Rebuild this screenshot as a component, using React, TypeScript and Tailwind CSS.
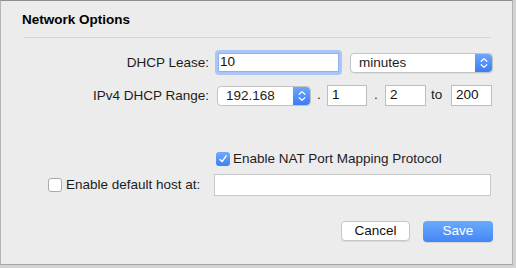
import React from "react";

function Stepper() {
  return (
    <div className="flex h-full w-[17px] items-center justify-center rounded-r-[4px] bg-gradient-to-b from-[#6ea6fb] to-[#3b7cf4]">
      <svg width="8" height="12" viewBox="0 0 8 12" fill="none">
        <path d="M1.2 4.3 L4 1.6 L6.8 4.3" stroke="white" strokeWidth="1.2" strokeLinecap="round" strokeLinejoin="round" />
        <path d="M1.2 7.7 L4 10.4 L6.8 7.7" stroke="white" strokeWidth="1.2" strokeLinecap="round" strokeLinejoin="round" />
      </svg>
    </div>
  );
}

function Field({ w, value }: { w: string; value: string }) {
  return (
    <div className={`flex h-[21px] ${w} items-center border border-[#bdbdbd] bg-white pl-[4px] text-[13.5px] text-[#111]`}>
      {value}
    </div>
  );
}

export default function App() {
  return (
    <div className="flex h-[268px] w-[516px] bg-[#d3d3d3] font-['Liberation_Sans',Arial,sans-serif] text-[13.5px] text-[#1c1c1c]">
      <div className="flex h-[265px] w-[513px] flex-col border-x border-b border-t border-x-[#b4b4b4] border-b-[#a6a6a6] border-t-[#8f8f8f] bg-[#ececec]">
        <div className="mt-[11px] ml-[21px] text-[13.5px] font-bold leading-[16px] text-black">Network Options</div>
        <div className="mt-[9px] ml-[23px] h-px w-[467px] bg-[#d5d5d5]" />

        {/* Row 1 */}
        <div className="mt-[12px] flex h-[25px] items-center">
          <div className="w-[208px] text-right leading-[16px]">DHCP Lease:</div>
          <div className="ml-[6px] h-[25px] w-[127px] rounded-[4px] bg-[#a9c6f7] p-[3px]">
            <div className="flex h-full w-full items-center border border-[#8fb1ee] bg-white pl-[1px] text-[13.5px] text-[#111]">10</div>
          </div>
          <div className="ml-[8px] flex h-[20px] w-[143px] items-center rounded-[4px] border border-[#c4c4c4] bg-white shadow-[0_1px_0_rgba(0,0,0,0.05)]">
            <div className="flex-1 pl-[8px] leading-[16px]">minutes</div>
            <Stepper />
          </div>
        </div>

        {/* Row 2 */}
        <div className="mt-[10px] flex h-[21px] items-center">
          <div className="w-[208px] text-right leading-[16px]">IPv4 DHCP Range:</div>
          <div className="ml-[8px] flex h-[20px] w-[94px] items-center rounded-[4px] border border-[#c4c4c4] bg-white">
            <div className="flex-1 pl-[8px] leading-[16px]">192.168</div>
            <Stepper />
          </div>
          <div className="w-[16px] text-center">.</div>
          <Field w="w-[40px]" value="1" />
          <div className="w-[18px] text-center">.</div>
          <Field w="w-[41px]" value="2" />
          <div className="ml-[5px] w-[20px]">to</div>
          <Field w="w-[41px]" value="200" />
        </div>

        {/* Row 3 */}
        <div className="mt-[45px] ml-[215px] flex h-[16px] items-center">
          <div className="flex h-[14px] w-[14px] items-center justify-center rounded-[3px] bg-gradient-to-b from-[#72aafb] to-[#3e80f5]">
            <svg width="10" height="10" viewBox="0 0 10 10" fill="none">
              <path d="M2 5.4 L4.1 7.6 L8.2 1.8" stroke="white" strokeWidth="1.4" strokeLinecap="round" strokeLinejoin="round" />
            </svg>
          </div>
          <div className="ml-[3px] leading-[16px]">Enable NAT Port Mapping Protocol</div>
        </div>

        {/* Row 4 */}
        <div className="mt-[7px] ml-[47px] flex h-[22px] items-center">
          <div className="flex w-[166px] items-center">
            <div className="h-[14px] w-[14px] rounded-[3px] border border-[#ababab] bg-white" />
            <div className="ml-[4px] leading-[16px]">Enable default host at:</div>
          </div>
          <div className="h-[22px] w-[277px] border border-[#c8c8c8] bg-white" />
        </div>

        {/* Buttons */}
        <div className="mt-[25px] ml-[340px] flex items-start">
          <div className="flex h-[20px] w-[69px] items-center justify-center rounded-[4px] border border-[#c6c6c6] bg-white text-[13.5px] text-[#111] shadow-[0_1px_0_rgba(0,0,0,0.08)]">
            Cancel
          </div>
          <div className="ml-[13px] flex h-[21px] w-[70px] items-center justify-center rounded-[4px] bg-gradient-to-b from-[#6aabfb] to-[#4586f6] text-[13.5px] text-white shadow-[0_1px_0_rgba(0,0,0,0.1)]">
            Save
          </div>
        </div>
      </div>
    </div>
  );
}
